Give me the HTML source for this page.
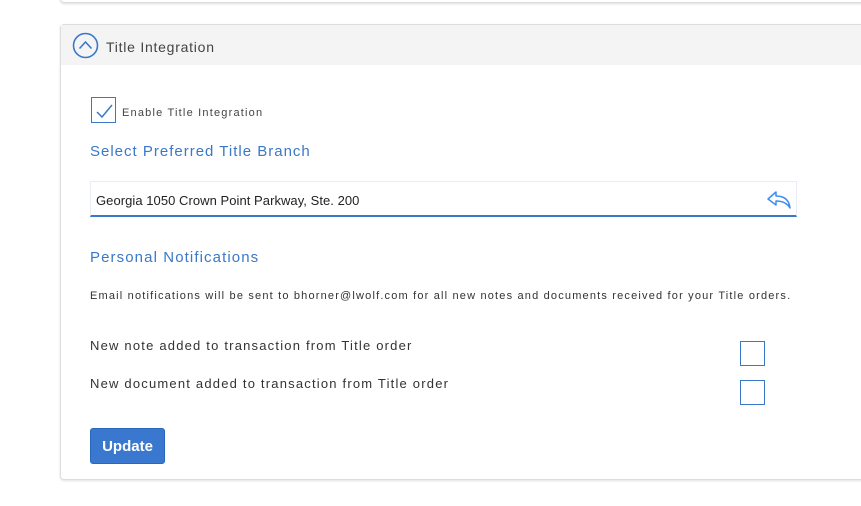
<!DOCTYPE html>
<html><head><style>
body{margin:0;width:861px;height:506px;background:#fff;font-family:"Liberation Sans",sans-serif;position:relative;overflow:hidden}
.a{position:absolute}
.t{color:#333;white-space:nowrap}
.blue{color:#3a78c9}
</style></head><body>
<div class="a" style="left:60px;top:-10px;width:820px;height:11px;border:1px solid #ddd;border-radius:4px;box-shadow:0 1px 2px #ddd"></div>
<div class="a" style="left:60px;top:24px;width:820px;height:454px;border:1px solid #ddd;border-radius:4px;box-shadow:0 1px 2px #e2e2e2"></div>
<div class="a" style="left:61px;top:25px;width:800px;height:40px;background:#f4f4f4"></div>
<svg class="a" style="left:72px;top:32px" width="27" height="27" viewBox="0 0 27 27"><circle cx="13.5" cy="13.5" r="12" fill="none" stroke="#3a78c9" stroke-width="1.6"/><path d="M7.5 16.5 L13.5 10 L19.5 16.5" fill="none" stroke="#3a78c9" stroke-width="1.6"/></svg>
<div class="a t" style="left:106px;top:39px;font-size:14px;color:#444;letter-spacing:0.75px">Title Integration</div>
<div class="a" style="left:91px;top:97px;width:23px;height:24px;border:1px solid #3a78c9"></div>
<svg class="a" style="left:91px;top:97px" width="25" height="26"><path d="M6 15 L11 20 L21 8" fill="none" stroke="#3a78c9" stroke-width="1.5"/></svg>
<div class="a t" style="left:122px;top:107px;font-size:11px;color:#444;letter-spacing:1.2px">Enable Title Integration</div>
<div class="a t blue" style="left:90px;top:143px;font-size:15px;letter-spacing:1px">Select Preferred Title Branch</div>
<div class="a" style="left:90px;top:181px;width:705px;height:33px;border:1px solid #e8ecf4;border-bottom:2px solid #3a78c9"></div>
<div class="a t" style="left:96px;top:193px;font-size:13px;color:#222;letter-spacing:0.05px">Georgia 1050 Crown Point Parkway, Ste. 200</div>
<svg class="a" style="left:765px;top:189px" width="28" height="24" viewBox="0 0 28 24"><path d="M3 10 L11 3 L11 7 C18 7 24 10 25 19 C22 14 17 12 11 12 L11 16 Z" fill="none" stroke="#3a8ef0" stroke-width="1.5" stroke-linejoin="round"/></svg>
<div class="a t blue" style="left:90px;top:249px;font-size:15px;letter-spacing:1.1px">Personal Notifications</div>
<div class="a t" style="left:90px;top:290px;font-size:11px;color:#333;letter-spacing:1.18px">Email notifications will be sent to bhorner@lwolf.com for all new notes and documents received for your Title orders.</div>
<div class="a t" style="left:90px;top:338px;font-size:13px;color:#333;letter-spacing:1.2px">New note added to transaction from Title order</div>
<div class="a t" style="left:90px;top:376px;font-size:13px;color:#333;letter-spacing:1.2px">New document added to transaction from Title order</div>
<div class="a" style="left:740px;top:341px;width:23px;height:23px;border:1px solid #3a78c9"></div>
<div class="a" style="left:740px;top:380px;width:23px;height:23px;border:1px solid #3a78c9"></div>
<div class="a" style="left:90px;top:428px;width:73px;height:34px;background:#3a78d0;border:1px solid #2a68c0;border-radius:3px;color:#fff;font-size:15px;font-weight:bold;text-align:center;line-height:36px">Update</div>
</body></html>
